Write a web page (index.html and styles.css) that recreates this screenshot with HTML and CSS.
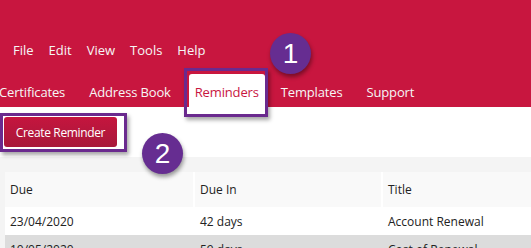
FILE: index.html
```html
<!DOCTYPE html>
<html lang="en">
<head>
    <meta charset="UTF-8">
    <title>Reminders</title>
    <link rel="stylesheet" href="styles.css">
</head>
<body>
    <div class="topbar">
        <!-- Menu bar -->
        <div class="menu">
            <span>File</span>
            <span>Edit</span>
            <span>View</span>
            <span>Tools</span>
            <span>Help</span>
        </div>

        <!-- Tabs -->
        <div class="tabs">
            <span class="tab first">Certificates</span>
            <span class="tab">Address Book</span>
            <span class="tab active">Reminders</span>
            <span class="tab">Templates</span>
            <span class="tab">Support</span>
        </div>
    </div>

    <div class="toolbar">
        <button type="button" class="btn-create">Create Reminder</button>
    </div>

    <div class="grid">
        <div class="row head">
            <div class="cell">Due</div>
            <div class="cell">Due In</div>
            <div class="cell">Title</div>
        </div>
        <div class="row">
            <div class="cell">23/04/2020</div>
            <div class="cell">42 days</div>
            <div class="cell">Account Renewal</div>
        </div>
        <div class="row alt">
            <div class="cell">10/05/2020</div>
            <div class="cell">59 days</div>
            <div class="cell">Cost of Renewal</div>
        </div>
    </div>

    <!-- Annotations -->
    <div class="mark mark-tab"></div>
    <div class="mark mark-btn"></div>
    <div class="badge badge-1">1</div>
    <div class="badge badge-2">2</div>
</body>
</html>
```

FILE: styles.css
```css
body {
    margin: 0;
    font-family: "Open Sans", "Noto Sans", sans-serif;
    background-color: #fff;
    color: #222;
    overflow: hidden;
}

.topbar {
    height: 107px;
    background-color: #c8163f;
    display: flex;
    flex-direction: column;
}

.menu {
    display: flex;
    gap: 15px;
    padding: 41px 0 0 13px;
    font-size: 13px;
    color: #f6f6f6;
}

.tabs {
    margin-top: auto;
    display: flex;
    align-items: flex-end;
    height: 33px;
}

.tab {
    height: 33px;
    line-height: 36px;
    padding: 0 12px;
    font-size: 13px;
    letter-spacing: -0.15px;
    color: #f6f6f6;
}

.tab.first {
    margin-left: -13px;
}

.tab.active {
    background-color: #fff;
    color: #c8163f;
    border-radius: 3px 3px 0 0;
    margin: 0 4px 0 6px;
    padding: 0 6px;
}

.toolbar {
    height: 50px;
    padding: 10px 0 0 4px;
    box-sizing: border-box;
}

.btn-create {
    width: 113px;
    height: 30px;
    border: none;
    border-radius: 3px;
    background: linear-gradient(#c5153e, #a8183b);
    color: #fff;
    font-family: inherit;
    font-size: 12px;
    letter-spacing: -0.35px;
    padding: 0;
}

.grid {
    background-color: #f4f4f4;
    padding: 15px 0 0 5px;
    font-size: 12px;
}

.row {
    display: grid;
    grid-template-columns: 188px 186px 1fr;
    column-gap: 2px;
    height: 28px;
    align-items: center;
    background-color: #fff;
}

.row.head {
    height: 35px;
}

.row.head .cell {
    background-color: #f9f9f9;
    height: 100%;
    display: flex;
    align-items: center;
}

.row.alt {
    background-color: #dcdcdc;
}

.cell {
    padding-left: 5px;
}

/* Annotation boxes and numbered badges */
.mark {
    position: absolute;
    border: 3px solid #6a2a8e;
    box-shadow: 2px 3px 4px rgba(0, 0, 0, 0.35);
}

.mark-tab {
    left: 184px;
    top: 68px;
    width: 78px;
    height: 43px;
}

.mark-btn {
    left: 0;
    top: 113px;
    width: 121px;
    height: 33px;
}

.badge {
    position: absolute;
    width: 41px;
    height: 41px;
    border-radius: 50%;
    background-color: #662d91;
    color: #fff;
    font-family: "Liberation Sans", Arial, sans-serif;
    font-size: 28px;
    line-height: 41px;
    text-align: center;
    box-shadow: 1px 3px 4px rgba(0, 0, 0, 0.4);
}

.badge-1 {
    left: 270px;
    top: 33px;
}

.badge-2 {
    left: 142px;
    top: 133px;
}
```
